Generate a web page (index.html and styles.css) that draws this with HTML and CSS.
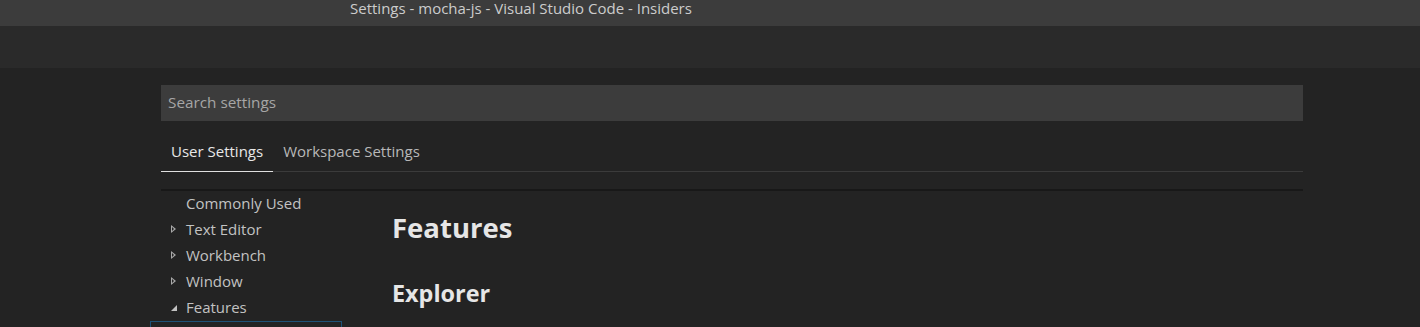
FILE: index.html
```html
<!DOCTYPE html>
<html lang="en">
<head>
  <meta charset="UTF-8" />
  <title>Settings - mocha-js - Visual Studio Code - Insiders</title>
  <link rel="stylesheet" href="styles.css">
</head>
<body>

  <div class="titlebar">Settings - mocha-js - Visual Studio Code - Insiders</div>

  <div class="tabbar"></div>

  <div class="editor">
    <div class="search">Search settings</div>

    <div class="tabs">
      <div class="tab active">User Settings</div>
      <div class="tab">Workspace Settings</div>
    </div>

    <div class="body">
      <div class="tree">
        <div class="row">Commonly Used</div>
        <div class="row"><span class="twistie closed"></span>Text Editor</div>
        <div class="row"><span class="twistie closed"></span>Workbench</div>
        <div class="row"><span class="twistie closed"></span>Window</div>
        <div class="row"><span class="twistie open"></span>Features</div>
        <div class="row focused"></div>
      </div>

      <div class="content">
        <h1>Features</h1>
        <h2>Explorer</h2>
      </div>
    </div>
  </div>

</body>
</html>
```

FILE: styles.css
```css
body {
  margin: 0;
  background: #232323;
  height: 100vh;
  overflow: hidden;
  font-family: 'Open Sans', sans-serif;
  color: #cccccc;
}

.titlebar {
  height: 26px;
  line-height: 17px;
  background: #3c3c3c;
  color: #cccccc;
  font-size: 15px;
  padding-left: 350px;
}

.tabbar {
  height: 42px;
  background: #2a2a2a;
}

.editor {
  margin: 17px 117px 0 161px;
}

.search {
  height: 36px;
  line-height: 35px;
  background: #3c3c3c;
  color: #a6a6a6;
  font-size: 15.3px;
  padding-left: 7px;
}

.tabs {
  display: flex;
  margin-top: 13px;
  border-bottom: 1px solid #3b3b3b;
}

.tab {
  padding: 0 10px;
  height: 37px;
  line-height: 35px;
  font-size: 15px;
  color: #b8b8b8;
  margin-bottom: -1px;
}

.tab.active {
  color: #e8e8e8;
  border-bottom: 1px solid #e0e0e0;
}

.body {
  display: flex;
  margin-top: 17px;
  border-top: 2px solid #181818;
}

.tree {
  width: 192px;
  margin-left: -11px;
  flex-shrink: 0;
}

.row {
  height: 26px;
  line-height: 24px;
  font-size: 15px;
  color: #c2c2c2;
  padding-left: 36px;
  position: relative;
  box-sizing: border-box;
}

.row.focused {
  border: 1px solid #1e5177;
}

.twistie {
  position: absolute;
  left: 21px;
  top: 8px;
  width: 0;
  height: 0;
}

.twistie.closed {
  border-top: 4px solid transparent;
  border-bottom: 4px solid transparent;
  border-left: 5px solid #a8a8a8;
}

.twistie.closed::after {
  content: '';
  position: absolute;
  left: -4px;
  top: -2px;
  border-top: 2px solid transparent;
  border-bottom: 2px solid transparent;
  border-left: 2px solid #232323;
}

.twistie.open {
  top: 10px;
  border-left: 6px solid transparent;
  border-bottom: 6px solid #c2c2c2;
}

.content {
  padding-left: 50px;
  color: #e6e6e6;
}

h1 {
  font-size: 27.5px;
  font-weight: bold;
  margin: 19px 0 0;
  line-height: 36px;
}

h2 {
  font-size: 23.4px;
  font-weight: bold;
  margin: 32px 0 0;
  line-height: 30px;
}
```
